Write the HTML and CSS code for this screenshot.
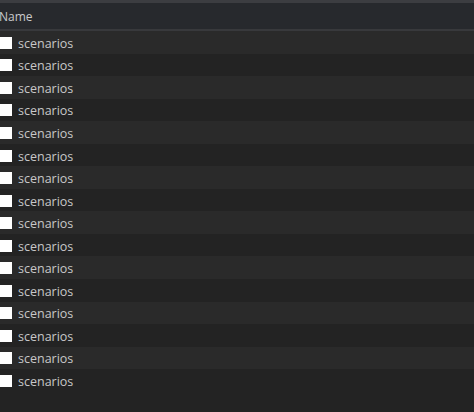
FILE: index.html
```html
<!DOCTYPE html>
<html>
<head>
<meta charset="utf-8">
<link rel="stylesheet" href="styles.css">
</head>
<body>
<div class="table">
  <div class="topbar"></div>
  <div class="header"><span class="hname">Name</span></div>
  <div class="rows">
    <div class="row"><span class="box"></span><span class="label">scenarios</span></div>
    <div class="row"><span class="box"></span><span class="label">scenarios</span></div>
    <div class="row"><span class="box"></span><span class="label">scenarios</span></div>
    <div class="row"><span class="box"></span><span class="label">scenarios</span></div>
    <div class="row"><span class="box"></span><span class="label">scenarios</span></div>
    <div class="row"><span class="box"></span><span class="label">scenarios</span></div>
    <div class="row"><span class="box"></span><span class="label">scenarios</span></div>
    <div class="row"><span class="box"></span><span class="label">scenarios</span></div>
    <div class="row"><span class="box"></span><span class="label">scenarios</span></div>
    <div class="row"><span class="box"></span><span class="label">scenarios</span></div>
    <div class="row"><span class="box"></span><span class="label">scenarios</span></div>
    <div class="row"><span class="box"></span><span class="label">scenarios</span></div>
    <div class="row"><span class="box"></span><span class="label">scenarios</span></div>
    <div class="row"><span class="box"></span><span class="label">scenarios</span></div>
    <div class="row"><span class="box"></span><span class="label">scenarios</span></div>
    <div class="row"><span class="box"></span><span class="label">scenarios</span></div>
  </div>
</div>
</body>
</html>
```
FILE: styles.css
```css
html, body {
  margin: 0;
  padding: 0;
  background: #232323;
  width: 474px;
  height: 412px;
  overflow: hidden;
  font-family: "Open Sans", "Noto Sans", sans-serif;
  font-size: 12px;
  color: #c8c8c8;
}
.table {
  display: flex;
  flex-direction: column;
}
.topbar {
  height: 3px;
  background: #3c3d41;
}
.header {
  height: 26px;
  background: #27292d;
  border-bottom: 2px solid #38393c;
  display: flex;
  align-items: center;
}
.hname {
  margin-left: -1px;
  color: #c9cacc;
}
.rows {
  display: flex;
  flex-direction: column;
}
.row {
  height: 22.55px;
  display: flex;
  align-items: center;
  gap: 6px;
  background: #232323;
}
.row:nth-child(odd) {
  background: #2a2a2a;
}
.box {
  width: 12px;
  height: 12px;
  margin-top: 1px;
  background: #ffffff;
  flex: none;
}
.label {
  font-size: 12.5px;
  padding-top: 2px;
  color: #c8c8c8;
}
```
